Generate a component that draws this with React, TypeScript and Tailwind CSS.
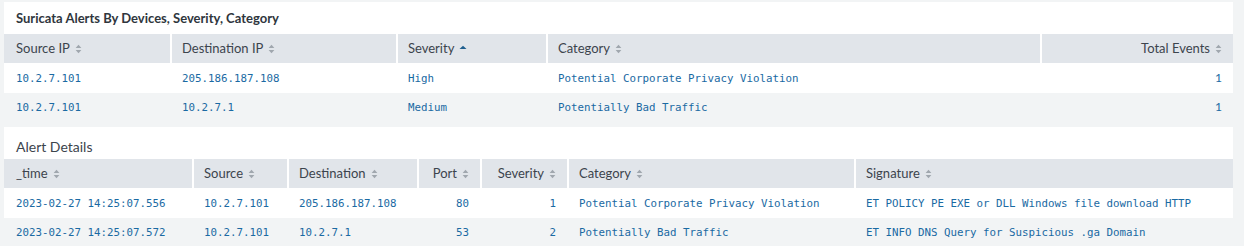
import React from "react";

const sans = "font-['Lato','Open_Sans',sans-serif]";
const mono = "font-['DejaVu_Sans_Mono','Liberation_Mono',monospace]";

function SortIcon({ active = false }: { active?: boolean }) {
  if (active) {
    return (
      <svg width="8" height="9" viewBox="0 0 8 9" className="ml-[5px] inline-block">
        <path d="M0.5 5 L4 1.8 L7.5 5 Z" fill="#1f5f8f" />
      </svg>
    );
  }
  return (
    <svg width="7" height="10" viewBox="0 0 7 10" className="ml-[5px] inline-block">
      <path d="M0.6 4 L3.5 0.8 L6.4 4 Z" fill="#a0a7ae" />
      <path d="M0.6 6 L3.5 9.2 L6.4 6 Z" fill="#a0a7ae" />
    </svg>
  );
}

type Col = { label: string; w: string; right?: boolean; active?: boolean };

function HeaderRow({ cols }: { cols: Col[] }) {
  return (
    <div className="flex h-[29px] bg-[#e1e5ea]">
      {cols.map((c, i) => (
        <div
          key={i}
          className={`${c.w} flex items-center text-[13px] text-[#3c444d] ${sans} ${
            c.right ? "justify-end pr-[11px]" : i > 0 ? "pl-[10px]" : "pl-[12px]"
          } ${i > 0 ? "border-l-2 border-white" : ""}`}
        >
          {c.label}
          <SortIcon active={c.active} />
        </div>
      ))}
    </div>
  );
}

function DataRow({
  cols,
  cells,
  odd,
}: {
  cols: Col[];
  cells: { t: string; sans?: boolean }[];
  odd: boolean;
}) {
  return (
    <div className={`flex h-[29.5px] ${odd ? "bg-[#f2f4f5]" : "bg-white"}`}>
      {cols.map((c, i) => (
        <div
          key={i}
          className={`${c.w} flex items-center text-[#1a6aa3] whitespace-nowrap ${
            cells[i].sans ? `${sans} text-[12px]` : `${mono} text-[10.8px] pt-[2px]`
          } ${c.right ? "justify-end pr-[11px]" : i > 0 ? "pl-[10px]" : "pl-[12px]"} ${
            i > 0 ? "border-l-2 border-transparent" : ""
          }`}
        >
          {cells[i].t}
        </div>
      ))}
    </div>
  );
}

const cols1: Col[] = [
  { label: "Source IP", w: "w-[166px]" },
  { label: "Destination IP", w: "w-[226px]" },
  { label: "Severity", w: "w-[150px]", active: true },
  { label: "Category", w: "w-[494px]" },
  { label: "Total Events", w: "w-[193px]", right: true },
];

const cols2: Col[] = [
  { label: "_time", w: "w-[188px]" },
  { label: "Source", w: "w-[95px]" },
  { label: "Destination", w: "w-[130px]" },
  { label: "Port", w: "w-[63px]", right: true },
  { label: "Severity", w: "w-[87px]", right: true },
  { label: "Category", w: "w-[287px]" },
  { label: "Signature", w: "w-[379px]" },
];

const rows1 = [
  ["10.2.7.101", "205.186.187.108", "High", "Potential Corporate Privacy Violation", "1"],
  ["10.2.7.101", "10.2.7.1", "Medium", "Potentially Bad Traffic", "1"],
];

const rows2 = [
  [
    "2023-02-27 14:25:07.556",
    "10.2.7.101",
    "205.186.187.108",
    "80",
    "1",
    "Potential Corporate Privacy Violation",
    "ET POLICY PE EXE or DLL Windows file download HTTP",
  ],
  [
    "2023-02-27 14:25:07.572",
    "10.2.7.101",
    "10.2.7.1",
    "53",
    "2",
    "Potentially Bad Traffic",
    "ET INFO DNS Query for Suspicious .ga Domain",
  ],
];

export default function App() {
  return (
    <div className="w-[1244px] h-[246px] overflow-hidden bg-[#f2f4f5] pl-[4px] pt-[2px]">
      <div className="w-[1229px] bg-white">
        <div className={`h-[32px] flex items-center pl-[12px] pt-[1px] text-[13px] font-bold text-[#2f363d] ${sans}`}>
          Suricata Alerts By Devices, Severity, Category
        </div>
        <HeaderRow cols={cols1} />
        {rows1.map((r, i) => (
          <DataRow
            key={i}
            cols={cols1}
            odd={i % 2 === 1}
            cells={r.map((t, j) => ({ t, sans: j === 4 }))}
          />
        ))}
      </div>
      <div className="w-[1229px] bg-white mt-[5px]">
        <div className={`h-[32px] flex items-center pt-[6px] pl-[12px] text-[14px] text-[#3c444d] ${sans}`}>
          Alert Details
        </div>
        <HeaderRow cols={cols2} />
        {rows2.map((r, i) => (
          <DataRow key={i} cols={cols2} odd={i % 2 === 1} cells={r.map((t) => ({ t }))} />
        ))}
      </div>
    </div>
  );
}
